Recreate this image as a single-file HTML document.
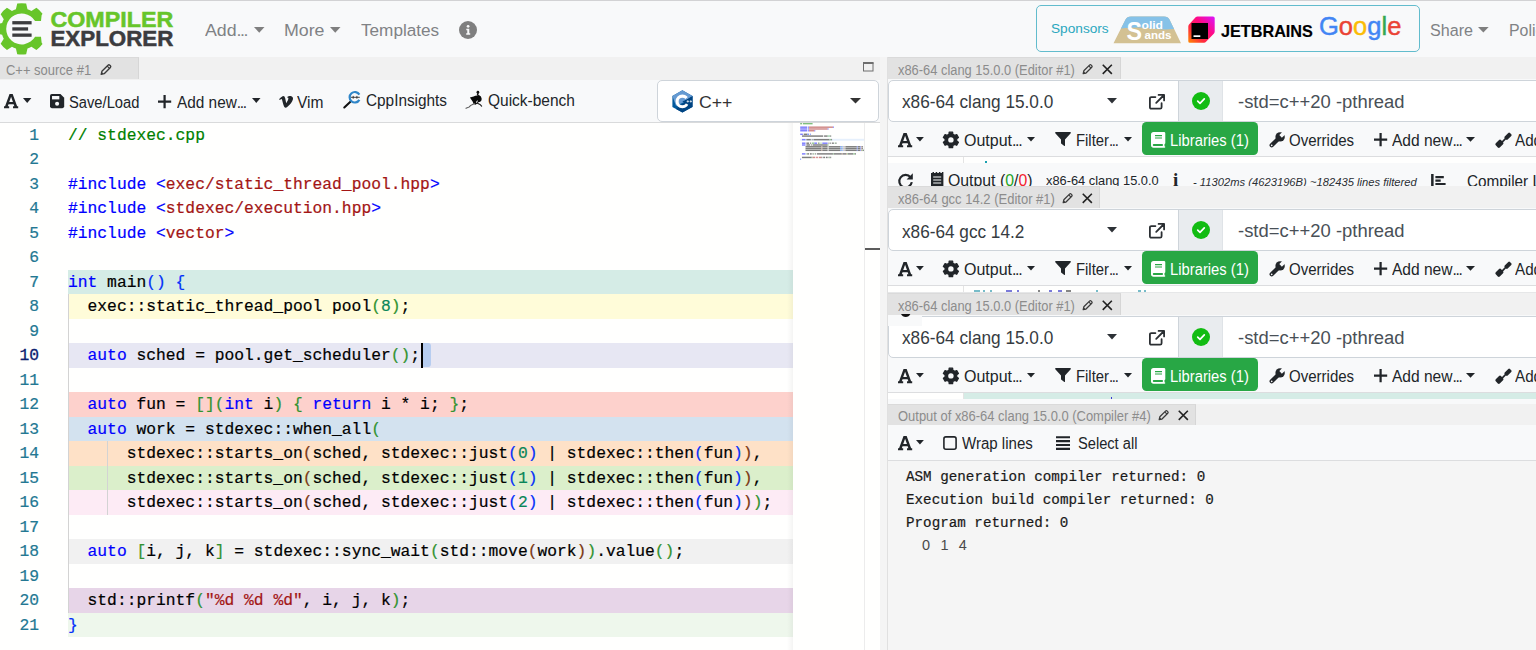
<!DOCTYPE html>
<html>
<head>
<meta charset="utf-8">
<title>Compiler Explorer</title>
<style>
*{box-sizing:border-box;margin:0;padding:0}
html,body{width:1536px;height:650px;overflow:hidden;background:#fff}
body{font-family:"Liberation Sans",sans-serif;color:#212529;position:relative}
.abs{position:absolute}
.t{position:absolute;white-space:pre;line-height:1;transform-origin:0 50%}
svg{position:absolute;overflow:visible}
#nav{position:absolute;left:0;top:0;width:1536px;height:57px;background:#f8f9fa;border-top:1px solid #d2d2d4}
.tabrow{position:absolute;background:#f1f1f1}
.tab{position:absolute;background:#e2e2e2;border-top:1px solid #dadada;border-right:1px solid #d6d6d6}
.bar{position:absolute;background:#f8f9fa}
.box{position:absolute;background:#fff;border:1px solid #ced4da;border-radius:5px}
#ed{position:absolute;left:0;top:122.5px;width:880px;height:528px;background:#fffffe;overflow:hidden}
.ln{position:absolute;left:0;width:39px;text-align:right;font-family:"Liberation Mono",monospace;font-size:16.305px;color:#237893;height:24.5px;line-height:26.6px;-webkit-text-stroke:0.2px currentColor}
.cl{position:absolute;left:68px;width:725px;height:24.5px;line-height:26.6px;font-family:"Liberation Mono",monospace;font-size:16.305px;color:#000;white-space:pre;-webkit-text-stroke:0.2px currentColor}
.k{color:#0000ff}.c{color:#008000}.s{color:#a31515}.n{color:#098658}
.b1{color:#0431fa}.b2{color:#319331}.b3{color:#7b3814}
.ig{position:absolute;width:1px;background:#d3d3d3}
</style>
</head>
<body>
<div id="nav"></div>
<svg style="left:0px;top:0px" width="180" height="58" viewBox="0 0 180 58"><path d="M35.09,21.10 L41.0,21.10 L41.6,15.2 L42.49,13.79 A25.7,25.7 0 0 0 36.44,7.85 L31.43,10.97 A20.4,20.4 0 0 0 27.49,9.34 L26.16,3.59 A25.7,25.7 0 0 0 17.24,3.59 L15.91,9.34 A20.4,20.4 0 0 0 11.97,10.97 L6.96,7.85 A25.7,25.7 0 0 0 0.65,14.16 L3.77,19.17 A20.4,20.4 0 0 0 2.14,23.11 L-3.61,24.44 A25.7,25.7 0 0 0 -3.61,33.36 L2.14,34.69 A20.4,20.4 0 0 0 3.77,38.63 L0.65,43.64 A25.7,25.7 0 0 0 6.96,49.95 L11.97,46.83 A20.4,20.4 0 0 0 15.91,48.46 L17.24,54.21 A25.7,25.7 0 0 0 26.16,54.21 L27.49,48.46 A20.4,20.4 0 0 0 31.43,46.83 L36.44,49.95 A25.7,25.7 0 0 0 42.49,44.01 L41.6,42.60 L41.0,36.70 L35.09,36.70 A15.5,15.5 0 1 1 35.09,21.10Z" fill="#67c52a"/>
<rect x="12.3" y="21.1" width="19.3" height="3.3" fill="#3c3c3f"/>
<rect x="12.3" y="27.3" width="15.8" height="3.3" fill="#3c3c3f"/>
<rect x="12.3" y="33.5" width="19.3" height="3.3" fill="#3c3c3f"/>
<text x="50.4" y="27" font-family="Liberation Sans" font-weight="bold" font-size="22.6" fill="#67c52a" stroke="#67c52a" stroke-width="0.5" textLength="123" lengthAdjust="spacingAndGlyphs">COMPILER</text>
<text x="50.4" y="46.3" font-family="Liberation Sans" font-weight="bold" font-size="21.6" fill="#3c3c3f" stroke="#3c3c3f" stroke-width="0.5" textLength="123" lengthAdjust="spacingAndGlyphs">EXPLORER</text></svg>
<div class="t" style="left:204.80px;top:22.00px;font-size:17.1px;color:#808285;font-family:'Liberation Sans',sans-serif;transform:scaleX(1.0387)">Add<span style="letter-spacing:-1.45px">...</span></div><svg style="left:253.60px;top:26.50px" width="10.50" height="5.70" viewBox="0 0 10.50 5.70"><path d="M0 0 H10.50 L5.25 5.70Z" fill="#7f7f7f"/></svg>
<div class="t" style="left:284.40px;top:22.00px;font-size:17.1px;color:#808285;font-family:'Liberation Sans',sans-serif;transform:scaleX(1.0398)">More</div><svg style="left:330.00px;top:26.50px" width="10.50" height="5.70" viewBox="0 0 10.50 5.70"><path d="M0 0 H10.50 L5.25 5.70Z" fill="#7f7f7f"/></svg>
<div class="t" style="left:360.70px;top:22.00px;font-size:17.1px;color:#808285;font-family:'Liberation Sans',sans-serif;transform:scaleX(1.0038)">Templates</div>
<svg style="left:458.8px;top:20.7px" width="18" height="18" viewBox="0 0 17 17"><circle cx="8.5" cy="8.5" r="8.5" fill="#7f7f7f"/><circle cx="8.6" cy="5" r="1.3" fill="#f8f9fa"/><path d="M6.9 7.4h2.8v4.2h0.9v1.4H6.8v-1.4h1V8.8h-0.9z" fill="#f8f9fa"/></svg>
<div class="abs" style="left:1036.3px;top:5px;width:383.6px;height:46.6px;border:1px solid #62bccd;border-radius:5px"></div>
<div class="t" style="left:1050.80px;top:22.00px;font-size:13.2px;color:#2aa7be;font-family:'Liberation Sans',sans-serif;transform:scaleX(1.0356)">Sponsors</div>

<svg style="left:1113px;top:15.5px" width="68" height="28" viewBox="0 0 68 28">
<defs><clipPath id="ssc"><path d="M0.5 27.3 L12.5 3.5 Q14 0.5 18 0.5 H51 Q55 0.5 56.5 3.5 L68 27.3 Z"/></clipPath></defs>
<g clip-path="url(#ssc)"><rect x="0" y="0" width="68" height="28" fill="#d3c193"/>
<path d="M0 0 H68 V12 Q55 14.5 40 12.5 Q22 10 0 13.5 Z" fill="#86c2e8"/></g>
<text x="13.5" y="23.6" font-family="Liberation Sans" font-weight="bold" font-size="25.5" fill="#fff" textLength="15.5" lengthAdjust="spacingAndGlyphs">S</text>
<text x="28.5" y="12.6" font-family="Liberation Sans" font-weight="bold" font-size="11" fill="#fff" textLength="21.5" lengthAdjust="spacingAndGlyphs">olid</text>
<text x="31.5" y="23.4" font-family="Liberation Sans" font-weight="bold" font-size="11" fill="#fff" textLength="27" lengthAdjust="spacingAndGlyphs">ands</text>
</svg>
<svg style="left:1188px;top:15.8px" width="27" height="27" viewBox="0 0 27 27">
<defs><linearGradient id="jbg" x1="0" y1="1" x2="1" y2="0"><stop offset="0" stop-color="#ff8a00"/><stop offset="0.3" stop-color="#ff2d3a"/><stop offset="0.62" stop-color="#ff0a86"/><stop offset="1" stop-color="#d915ff"/></linearGradient></defs>
<path d="M9.5 0.4 H25 Q26.7 0.4 26.7 2 V15.5 Q26.7 16.6 26 17.4 L18 25.8 Q17.2 26.7 16 26.7 H1.8 Q0.3 26.7 0.3 25.2 V10.5 Q0.3 9.4 1 8.6 L7.6 1.3 Q8.4 0.4 9.5 0.4Z" fill="url(#jbg)"/>
<rect x="3.5" y="7" width="16.5" height="16" fill="#000"/>
<rect x="5.5" y="19.3" width="6.8" height="1.7" fill="#fff"/>
</svg>
<div class="t" style="left:1220.70px;top:23.00px;font-size:16.3px;color:#000;font-family:'Liberation Sans',sans-serif;font-weight:bold;transform:scaleX(0.9959);-webkit-text-stroke:0.15px #000">JETBRAINS</div>
<div class="t" style="left:1319.2px;top:13.32px;font-size:26.2px;transform:scaleX(0.975);-webkit-text-stroke:0.45px currentColor"><span style="color:#4285f4">G</span><span style="color:#ea4335">o</span><span style="color:#fbbc05">o</span><span style="color:#4285f4">g</span><span style="color:#34a853">l</span><span style="color:#ea4335">e</span></div>

<div class="t" style="left:1430.00px;top:22.00px;font-size:17.1px;color:#808285;font-family:'Liberation Sans',sans-serif;transform:scaleX(0.9425)">Share</div><svg style="left:1478.00px;top:26.50px" width="10.70" height="5.50" viewBox="0 0 10.70 5.50"><path d="M0 0 H10.70 L5.35 5.50Z" fill="#7f7f7f"/></svg>
<div class="t" style="left:1509.40px;top:22.00px;font-size:17.1px;color:#808285;font-family:'Liberation Sans',sans-serif;transform:scaleX(0.93)">Policies</div>


<div class="tabrow" style="left:0;top:57px;width:881.2px;height:22.5px"></div>
<div class="tab" style="left:0;top:57px;width:139px;height:22.3px"></div>
<div class="t" style="left:6.30px;top:63.00px;font-size:14px;color:#8a8a8a;font-family:'Liberation Sans',sans-serif;transform:scaleX(0.9266)">C++ source #1</div>
<svg style="left:100.6px;top:63.6px" width="10.5" height="10.5" viewBox="0 0 10.5 10.5"><path d="M0.2 10.3 L0.9 7.3 L7 1.2 Q7.9 0.3 8.8 1.2 L9.4 1.8 Q10.2 2.7 9.4 3.5 L3.2 9.7 Z" fill="none" stroke="#3a3a3a" stroke-width="1.35" stroke-linejoin="round"/><path d="M6.2 2.1 L8.5 4.4" stroke="#3a3a3a" stroke-width="1.2"/><path d="M0.2 10.3 L0.8 7.9 L2.6 9.7Z" fill="#3a3a3a"/></svg>
<svg style="left:862.5px;top:61.5px" width="10.5" height="9.5" viewBox="0 0 10.5 9.5"><rect x="0.5" y="1" width="9.5" height="8" fill="none" stroke="#6e6e6e" stroke-width="1"/><rect x="0" y="0" width="10.5" height="2" fill="#6e6e6e"/></svg>
<div class="bar" style="left:0;top:79.5px;width:880px;height:43px;border-bottom:1px solid #d9dadb"></div>
<svg style="left:4.4px;top:94.3px" width="14.2" height="14.2" viewBox="0 0 14 14"><path fill-rule="evenodd" d="M5.45 0 H8.55 L12.95 12.1 H14 V14 H8.9 V12.1 H10.25 L9.55 10 H4.45 L3.75 12.1 H5.1 V14 H0 V12.1 H1.05 Z M5.15 8 H8.85 L7 2.6 Z" fill="#212529"/></svg><svg style="left:22.60px;top:98.20px" width="8.40" height="4.90" viewBox="0 0 8.40 4.90"><path d="M0 0 H8.40 L4.20 4.90Z" fill="#212529"/></svg>
<svg style="left:50.3px;top:94.3px" width="14.2" height="14.2" viewBox="0 0 14 14"><path d="M1.8 0 H10.3 L14 3.7 V12.2 Q14 14 12.2 14 H1.8 Q0 14 0 12.2 V1.8 Q0 0 1.8 0Z" fill="#212529"/><rect x="2" y="2" width="7.2" height="3.3" fill="#f8f9fa"/><circle cx="7" cy="9.6" r="2" fill="#f8f9fa"/></svg>
<div class="t" style="left:68.80px;top:95.00px;font-size:16px;color:#212529;font-family:'Liberation Sans',sans-serif;transform:scaleX(0.9201)">Save/Load</div>
<svg style="left:158.3px;top:95.2px" width="13.2" height="13.2" viewBox="0 0 13 13"><path d="M6.5 0 V13 M0 6.5 H13" stroke="#212529" stroke-width="2.2" fill="none"/></svg>
<div class="t" style="left:176.50px;top:95.00px;font-size:16px;color:#212529;font-family:'Liberation Sans',sans-serif;transform:scaleX(0.9603)">Add new<span style="letter-spacing:-1.36px">...</span></div><svg style="left:251.50px;top:98.20px" width="8.50" height="4.90" viewBox="0 0 8.50 4.90"><path d="M0 0 H8.50 L4.25 4.90Z" fill="#212529"/></svg>
<svg style="left:278.6px;top:95.8px" width="14.5" height="11.8" viewBox="0 0 14.5 11.8"><path d="M0 3.2 Q1.8 1 3.6 0.2 Q5.6 -0.4 6.2 2.2 L7.2 7.2 Q9.6 4 9.4 2.3 Q9.2 1.2 7.9 1.8 Q8.6 -0.6 11.6 0 Q14.6 0.6 13.9 3.4 Q12.9 7 8.2 11 Q6.4 12.4 5.2 10.8 Q4.4 9.6 3 3.6 Q2.6 2.4 1 3.9Z" fill="#212529"/></svg>
<div class="t" style="left:297.00px;top:95.00px;font-size:16px;color:#212529;font-family:'Liberation Sans',sans-serif;transform:scaleX(0.9719)">Vim</div>
<svg style="left:343px;top:90px" width="20" height="20" viewBox="0 0 20 20"><path d="M1.3 17.5 L7.4 11.8" stroke="#111" stroke-width="2.1" stroke-linecap="round"/>
<path d="M16.4 4.6 A5.25 5.25 0 1 0 16.4 9.9" fill="none" stroke="#2f86c8" stroke-width="2.2"/>
<path d="M7.8 7.3 H16.8 M10.2 5.9 V8.7 M13.9 5.9 V8.7" stroke="#2a2a2a" stroke-width="0.9"/></svg>
<div class="t" style="left:365.50px;top:93.00px;font-size:16px;color:#212529;font-family:'Liberation Sans',sans-serif;transform:scaleX(0.9586)">CppInsights</div>
<svg style="left:465px;top:90px" width="18" height="19" viewBox="0 0 18 19"><circle cx="12.9" cy="2.2" r="1.35" fill="#111"/>
<path d="M13.4 3 Q11.6 4.6 13.6 5.6 Q15.4 6.4 15.4 7.6" fill="none" stroke="#111" stroke-width="1.5"/>
<path d="M4.9 7.6 L8.6 6.6 Q11.5 4.9 14.6 6 Q17.4 7.4 16.4 10.6 Q15.6 12.4 13.8 12 L12.4 13.4 L10.4 14.8 Q8.2 14.2 7.6 11.4 Z" fill="#0a0a0a"/>
<path d="M10.9 12.9 Q11.2 10.6 12.9 10.2 L12.2 12.6Z" fill="#f8f9fa"/>
<path d="M9.6 13.6 L5.4 15.6 L4.4 16.9 L1 18.2" fill="none" stroke="#555" stroke-width="1.1" stroke-linecap="round"/>
<path d="M12.4 13.3 L15 14.4 L16.6 16.1" fill="none" stroke="#222" stroke-width="1.2" stroke-linecap="round"/></svg>
<div class="t" style="left:487.60px;top:93.00px;font-size:16px;color:#212529;font-family:'Liberation Sans',sans-serif;transform:scaleX(0.9674)">Quick-bench</div>
<div class="box" style="left:657.4px;top:80px;width:222px;height:42px"></div>
<svg style="left:672.2px;top:89.8px" width="20.8" height="22.8" viewBox="0 0 20.8 22.8"><path d="M10.4 0.2 L20.4 5.9 V16.9 L10.4 22.6 L0.4 16.9 V5.9 Z" fill="#00599c"/>
<path d="M10.4 0.2 L20.4 5.9 L10.4 11.4 L0.4 5.9 Z M0.4 5.9 L10.4 11.4 L20.4 5.9 L20.4 8 L 4 16 Z" fill="#659ad2"/>
<path d="M20.4 5.9 V16.9 L10.4 22.6 L4 19 Z" fill="#004482"/>
<circle cx="10.4" cy="11.4" r="5.3" fill="none" stroke="#fff" stroke-width="3.1"/>
<path d="M10.4 11.4 L20.4 5.9 V16.9 Z" fill="#004482"/>
<path d="M10.4 11.4 L20.4 5.9 L18.5 4.8 L 13.5 9 Z" fill="#659ad2"/>
<path d="M14.6 11.4 H17 M15.8 10.2 V12.6 M17.6 11.4 H20 M18.8 10.2 V12.6" stroke="#fff" stroke-width="0.7"/></svg>
<div class="t" style="left:698.60px;top:95.00px;font-size:16px;color:#333;font-family:'Liberation Sans',sans-serif;transform:scaleX(1.1041)">C++</div>
<svg style="left:850.00px;top:98.00px" width="11.00" height="5.40" viewBox="0 0 11.00 5.40"><path d="M0 0 H11.00 L5.50 5.40Z" fill="#333"/></svg>

<div id="ed">
<div class="ln" style="top:0.0px">1</div>
<div class="cl" style="top:0.0px"><span class="c">// stdexec.cpp</span></div>
<div class="ln" style="top:24.5px">2</div>
<div class="cl" style="top:24.5px"></div>
<div class="ln" style="top:49.0px">3</div>
<div class="cl" style="top:49.0px"><span class="k">#include</span> <span class="k">&lt;</span><span class="s">exec/static_thread_pool.hpp</span><span class="k">&gt;</span></div>
<div class="ln" style="top:73.5px">4</div>
<div class="cl" style="top:73.5px"><span class="k">#include</span> <span class="k">&lt;</span><span class="s">stdexec/execution.hpp</span><span class="k">&gt;</span></div>
<div class="ln" style="top:98.0px">5</div>
<div class="cl" style="top:98.0px"><span class="k">#include</span> <span class="k">&lt;</span><span class="s">vector</span><span class="k">&gt;</span></div>
<div class="ln" style="top:122.5px">6</div>
<div class="cl" style="top:122.5px"></div>
<div class="ln" style="top:147.0px">7</div>
<div class="cl" style="top:147.0px;background:#d5ece6"><span class="k">int</span> main<span class="b1">()</span> <span class="b1">{</span></div>
<div class="ln" style="top:171.5px">8</div>
<div class="cl" style="top:171.5px;background:#fffcd9">  exec::static_thread_pool pool<span class="b2">(</span><span class="n">8</span><span class="b2">)</span>;</div>
<div class="ln" style="top:196.0px">9</div>
<div class="cl" style="top:196.0px"></div>
<div class="ln" style="top:220.5px;color:#0b216f;-webkit-text-stroke:0.3px #0b216f">10</div>
<div class="cl" style="top:220.5px;background:#e7e7f3">  <span class="k">auto</span> sched = pool.get_scheduler<span class="b2">()</span>;</div>
<div class="ln" style="top:245.0px">11</div>
<div class="cl" style="top:245.0px"></div>
<div class="ln" style="top:269.5px">12</div>
<div class="cl" style="top:269.5px;background:#fdd1cc">  <span class="k">auto</span> fun = <span class="b2">[](</span><span class="k">int</span> i<span class="b2">)</span> <span class="b2">{</span> <span class="k">return</span> i * i; <span class="b2">}</span>;</div>
<div class="ln" style="top:294.0px">13</div>
<div class="cl" style="top:294.0px;background:#d3e2ef">  <span class="k">auto</span> work = stdexec::when_all<span class="b2">(</span></div>
<div class="ln" style="top:318.5px">14</div>
<div class="cl" style="top:318.5px;background:#fee1c7">      stdexec::starts_on<span class="b3">(</span>sched, stdexec::just<span class="b1">(</span><span class="n">0</span><span class="b1">)</span> | stdexec::then<span class="b1">(</span>fun<span class="b1">)</span><span class="b3">)</span>,</div>
<div class="ln" style="top:343.0px">15</div>
<div class="cl" style="top:343.0px;background:#dbefcb">      stdexec::starts_on<span class="b3">(</span>sched, stdexec::just<span class="b1">(</span><span class="n">1</span><span class="b1">)</span> | stdexec::then<span class="b1">(</span>fun<span class="b1">)</span><span class="b3">)</span>,</div>
<div class="ln" style="top:367.5px">16</div>
<div class="cl" style="top:367.5px;background:#fdebf5">      stdexec::starts_on<span class="b3">(</span>sched, stdexec::just<span class="b1">(</span><span class="n">2</span><span class="b1">)</span> | stdexec::then<span class="b1">(</span>fun<span class="b1">)</span><span class="b3">)</span><span class="b2">)</span>;</div>
<div class="ln" style="top:392.0px">17</div>
<div class="cl" style="top:392.0px"></div>
<div class="ln" style="top:416.5px">18</div>
<div class="cl" style="top:416.5px;background:#f1f1f1">  <span class="k">auto</span> <span class="b2">[</span>i, j, k<span class="b2">]</span> = stdexec::sync_wait<span class="b2">(</span>std::move<span class="b3">(</span>work<span class="b3">)</span><span class="b2">)</span>.value<span class="b2">()</span>;</div>
<div class="ln" style="top:441.0px">19</div>
<div class="cl" style="top:441.0px"></div>
<div class="ln" style="top:465.5px">20</div>
<div class="cl" style="top:465.5px;background:#e7d5e8">  std::printf<span class="b2">(</span><span class="s">"%d %d %d"</span>, i, j, k<span class="b2">)</span>;</div>
<div class="ln" style="top:490.0px">21</div>
<div class="cl" style="top:490.0px;background:#eef7ec"><span class="b1">}</span></div>
<div class="ig" style="left:68px;top:171.5px;height:318.5px"></div>
<div class="ig" style="left:107px;top:318.5px;height:73.5px"></div>
<div class="abs" style="left:421.8px;top:220.5px;width:9px;height:23.5px;background:#b7cdf0;border-radius:0 3px 3px 0"></div>
<div class="abs" style="left:420.5px;top:220.5px;width:2px;height:24.5px;background:#000"></div>
<div class="abs" style="left:787px;top:0;width:6px;height:528px;background:linear-gradient(to right,rgba(0,0,0,0),rgba(0,0,0,0.045))"></div>
<div class="abs" style="left:793px;top:0;width:72px;height:528px;background:#fffffe"></div>
<svg style="left:793px;top:0" width="72" height="40" viewBox="0 0 72 40"><g opacity="0.5"><rect x="7" y="15.82" width="64.5" height="1.9" fill="#cfe2fc"/><rect x="7.20" y="-0.10" width="1.77" height="1.45" fill="#008000"/><rect x="9.86" y="-0.10" width="9.73" height="1.45" fill="#008000"/><rect x="7.20" y="3.46" width="7.08" height="1.45" fill="#0000ff"/><rect x="15.16" y="3.46" width="0.89" height="1.45" fill="#0000ff"/><rect x="16.05" y="3.46" width="23.89" height="1.45" fill="#a31515"/><rect x="39.95" y="3.46" width="0.89" height="1.45" fill="#0000ff"/><rect x="7.20" y="5.24" width="7.08" height="1.45" fill="#0000ff"/><rect x="15.16" y="5.24" width="0.89" height="1.45" fill="#0000ff"/><rect x="16.05" y="5.24" width="18.59" height="1.45" fill="#a31515"/><rect x="34.63" y="5.24" width="0.89" height="1.45" fill="#0000ff"/><rect x="7.20" y="7.02" width="7.08" height="1.45" fill="#0000ff"/><rect x="15.16" y="7.02" width="0.89" height="1.45" fill="#0000ff"/><rect x="16.05" y="7.02" width="5.31" height="1.45" fill="#a31515"/><rect x="21.36" y="7.02" width="0.89" height="1.45" fill="#0000ff"/><rect x="7.20" y="10.58" width="2.66" height="1.45" fill="#0000ff"/><rect x="10.74" y="10.58" width="3.54" height="1.45" fill="#000000"/><rect x="14.28" y="10.58" width="1.77" height="1.45" fill="#0431fa"/><rect x="16.93" y="10.58" width="0.89" height="1.45" fill="#0431fa"/><rect x="8.97" y="12.36" width="21.24" height="1.45" fill="#000000"/><rect x="31.09" y="12.36" width="3.54" height="1.45" fill="#000000"/><rect x="34.63" y="12.36" width="0.89" height="1.45" fill="#319331"/><rect x="35.52" y="12.36" width="0.89" height="1.45" fill="#098658"/><rect x="36.41" y="12.36" width="0.89" height="1.45" fill="#319331"/><rect x="37.29" y="12.36" width="0.89" height="1.45" fill="#000000"/><rect x="8.97" y="15.92" width="3.54" height="1.45" fill="#0000ff"/><rect x="13.39" y="15.92" width="4.42" height="1.45" fill="#000000"/><rect x="18.71" y="15.92" width="0.89" height="1.45" fill="#000000"/><rect x="20.48" y="15.92" width="15.93" height="1.45" fill="#000000"/><rect x="36.41" y="15.92" width="1.77" height="1.45" fill="#319331"/><rect x="38.18" y="15.92" width="0.89" height="1.45" fill="#000000"/><rect x="8.97" y="19.48" width="3.54" height="1.45" fill="#0000ff"/><rect x="13.39" y="19.48" width="2.66" height="1.45" fill="#000000"/><rect x="16.93" y="19.48" width="0.89" height="1.45" fill="#000000"/><rect x="18.71" y="19.48" width="2.66" height="1.45" fill="#319331"/><rect x="21.36" y="19.48" width="2.66" height="1.45" fill="#0000ff"/><rect x="24.90" y="19.48" width="0.89" height="1.45" fill="#000000"/><rect x="25.79" y="19.48" width="0.89" height="1.45" fill="#319331"/><rect x="27.55" y="19.48" width="0.89" height="1.45" fill="#319331"/><rect x="29.32" y="19.48" width="5.31" height="1.45" fill="#0000ff"/><rect x="35.52" y="19.48" width="0.89" height="1.45" fill="#000000"/><rect x="37.29" y="19.48" width="0.89" height="1.45" fill="#000000"/><rect x="39.06" y="19.48" width="1.77" height="1.45" fill="#000000"/><rect x="41.72" y="19.48" width="0.89" height="1.45" fill="#319331"/><rect x="42.60" y="19.48" width="0.89" height="1.45" fill="#000000"/><rect x="8.97" y="21.26" width="3.54" height="1.45" fill="#0000ff"/><rect x="13.39" y="21.26" width="3.54" height="1.45" fill="#000000"/><rect x="17.82" y="21.26" width="0.89" height="1.45" fill="#000000"/><rect x="19.59" y="21.26" width="15.04" height="1.45" fill="#000000"/><rect x="34.63" y="21.26" width="0.89" height="1.45" fill="#319331"/><rect x="12.51" y="23.04" width="15.93" height="1.45" fill="#000000"/><rect x="28.44" y="23.04" width="0.89" height="1.45" fill="#7b3814"/><rect x="29.32" y="23.04" width="5.31" height="1.45" fill="#000000"/><rect x="35.52" y="23.04" width="11.51" height="1.45" fill="#000000"/><rect x="47.03" y="23.04" width="0.89" height="1.45" fill="#0431fa"/><rect x="47.91" y="23.04" width="0.89" height="1.45" fill="#098658"/><rect x="48.80" y="23.04" width="0.89" height="1.45" fill="#0431fa"/><rect x="50.57" y="23.04" width="0.89" height="1.45" fill="#000000"/><rect x="52.34" y="23.04" width="11.51" height="1.45" fill="#000000"/><rect x="63.84" y="23.04" width="0.89" height="1.45" fill="#0431fa"/><rect x="64.72" y="23.04" width="2.66" height="1.45" fill="#000000"/><rect x="67.38" y="23.04" width="0.89" height="1.45" fill="#0431fa"/><rect x="68.27" y="23.04" width="0.89" height="1.45" fill="#7b3814"/><rect x="69.15" y="23.04" width="0.89" height="1.45" fill="#000000"/><rect x="12.51" y="24.82" width="15.93" height="1.45" fill="#000000"/><rect x="28.44" y="24.82" width="0.89" height="1.45" fill="#7b3814"/><rect x="29.32" y="24.82" width="5.31" height="1.45" fill="#000000"/><rect x="35.52" y="24.82" width="11.51" height="1.45" fill="#000000"/><rect x="47.03" y="24.82" width="0.89" height="1.45" fill="#0431fa"/><rect x="47.91" y="24.82" width="0.89" height="1.45" fill="#098658"/><rect x="48.80" y="24.82" width="0.89" height="1.45" fill="#0431fa"/><rect x="50.57" y="24.82" width="0.89" height="1.45" fill="#000000"/><rect x="52.34" y="24.82" width="11.51" height="1.45" fill="#000000"/><rect x="63.84" y="24.82" width="0.89" height="1.45" fill="#0431fa"/><rect x="64.72" y="24.82" width="2.66" height="1.45" fill="#000000"/><rect x="67.38" y="24.82" width="0.89" height="1.45" fill="#0431fa"/><rect x="68.27" y="24.82" width="0.89" height="1.45" fill="#7b3814"/><rect x="69.15" y="24.82" width="0.89" height="1.45" fill="#000000"/><rect x="12.51" y="26.60" width="15.93" height="1.45" fill="#000000"/><rect x="28.44" y="26.60" width="0.89" height="1.45" fill="#7b3814"/><rect x="29.32" y="26.60" width="5.31" height="1.45" fill="#000000"/><rect x="35.52" y="26.60" width="11.51" height="1.45" fill="#000000"/><rect x="47.03" y="26.60" width="0.89" height="1.45" fill="#0431fa"/><rect x="47.91" y="26.60" width="0.89" height="1.45" fill="#098658"/><rect x="48.80" y="26.60" width="0.89" height="1.45" fill="#0431fa"/><rect x="50.57" y="26.60" width="0.89" height="1.45" fill="#000000"/><rect x="52.34" y="26.60" width="11.51" height="1.45" fill="#000000"/><rect x="63.84" y="26.60" width="0.89" height="1.45" fill="#0431fa"/><rect x="64.72" y="26.60" width="2.66" height="1.45" fill="#000000"/><rect x="67.38" y="26.60" width="0.89" height="1.45" fill="#0431fa"/><rect x="68.27" y="26.60" width="0.89" height="1.45" fill="#7b3814"/><rect x="69.15" y="26.60" width="0.89" height="1.45" fill="#319331"/><rect x="70.03" y="26.60" width="0.89" height="1.45" fill="#000000"/><rect x="8.97" y="30.16" width="3.54" height="1.45" fill="#0000ff"/><rect x="13.39" y="30.16" width="0.89" height="1.45" fill="#319331"/><rect x="14.28" y="30.16" width="1.77" height="1.45" fill="#000000"/><rect x="16.93" y="30.16" width="1.77" height="1.45" fill="#000000"/><rect x="19.59" y="30.16" width="0.89" height="1.45" fill="#000000"/><rect x="20.48" y="30.16" width="0.89" height="1.45" fill="#319331"/><rect x="22.25" y="30.16" width="0.89" height="1.45" fill="#000000"/><rect x="24.02" y="30.16" width="15.93" height="1.45" fill="#000000"/><rect x="39.95" y="30.16" width="0.89" height="1.45" fill="#319331"/><rect x="40.83" y="30.16" width="7.96" height="1.45" fill="#000000"/><rect x="48.80" y="30.16" width="0.89" height="1.45" fill="#7b3814"/><rect x="49.68" y="30.16" width="3.54" height="1.45" fill="#000000"/><rect x="53.22" y="30.16" width="0.89" height="1.45" fill="#7b3814"/><rect x="54.11" y="30.16" width="0.89" height="1.45" fill="#319331"/><rect x="54.99" y="30.16" width="5.31" height="1.45" fill="#000000"/><rect x="60.30" y="30.16" width="1.77" height="1.45" fill="#319331"/><rect x="62.07" y="30.16" width="0.89" height="1.45" fill="#000000"/><rect x="8.97" y="33.72" width="9.73" height="1.45" fill="#000000"/><rect x="18.71" y="33.72" width="0.89" height="1.45" fill="#319331"/><rect x="19.59" y="33.72" width="2.66" height="1.45" fill="#a31515"/><rect x="23.13" y="33.72" width="1.77" height="1.45" fill="#a31515"/><rect x="25.79" y="33.72" width="2.66" height="1.45" fill="#a31515"/><rect x="28.44" y="33.72" width="0.89" height="1.45" fill="#000000"/><rect x="30.21" y="33.72" width="1.77" height="1.45" fill="#000000"/><rect x="32.87" y="33.72" width="1.77" height="1.45" fill="#000000"/><rect x="35.52" y="33.72" width="0.89" height="1.45" fill="#000000"/><rect x="36.41" y="33.72" width="0.89" height="1.45" fill="#319331"/><rect x="37.29" y="33.72" width="0.89" height="1.45" fill="#000000"/><rect x="7.20" y="35.50" width="0.89" height="1.45" fill="#0431fa"/></g></svg>
<div class="abs" style="left:864px;top:0;width:1px;height:528px;background:#ececec"></div>
<div class="abs" style="left:865px;top:125.5px;width:15px;height:2px;background:#5c5c5c"></div>
</div>

<div class="abs" style="left:880px;top:57px;width:7.5px;height:593px;background:#f4f4f4"></div>

<div class="tabrow" style="left:887.5px;top:57px;width:649px;height:23px"></div>
<div class="tab" style="left:887.5px;top:57px;width:233.29999999999995px;height:22.3px"></div>
<div class="t" style="left:897.90px;top:63.00px;font-size:14px;color:#8c8c8c;font-family:'Liberation Sans',sans-serif;transform:scaleX(0.9202)">x86-64 clang 15.0.0 (Editor #1)</div>
<svg style="left:1083.4px;top:64.2px" width="9.8" height="9.8" viewBox="0 0 10.5 10.5"><path d="M0.2 10.3 L0.9 7.3 L7 1.2 Q7.9 0.3 8.8 1.2 L9.4 1.8 Q10.2 2.7 9.4 3.5 L3.2 9.7 Z" fill="none" stroke="#3a3a3a" stroke-width="1.35" stroke-linejoin="round"/><path d="M6.2 2.1 L8.5 4.4" stroke="#3a3a3a" stroke-width="1.2"/><path d="M0.2 10.3 L0.8 7.9 L2.6 9.7Z" fill="#3a3a3a"/></svg>
<svg style="left:1102.3px;top:64.2px" width="10.6" height="10.6" viewBox="0 0 10 10"><path d="M0.7 0.7 L9.3 9.3 M9.3 0.7 L0.7 9.3" stroke="#222" stroke-width="1.5" fill="none"/></svg>
<div class="bar" style="left:887.5px;top:79.3px;width:649px;height:77.5px"></div>
<div class="box" style="left:888.4px;top:80px;width:700px;height:42px"></div>
<div class="t" style="left:902.00px;top:94.00px;font-size:17.8px;color:#363b41;font-family:'Liberation Sans',sans-serif;transform:scaleX(0.9686)">x86-64 clang 15.0.0</div>
<svg style="left:1107.00px;top:98.00px" width="10.00" height="5.50" viewBox="0 0 10.00 5.50"><path d="M0 0 H10.00 L5.00 5.50Z" fill="#2d3136"/></svg>
<svg style="left:1148.9px;top:93.6px" width="16" height="15.6" viewBox="0 0 16 15.6"><path d="M12.6 9.2 V13.2 Q12.6 14.7 11.1 14.7 H2.4 Q0.9 14.7 0.9 13.2 V4.6 Q0.9 3.1 2.4 3.1 H6.4" fill="none" stroke="#2b2f33" stroke-width="1.8" stroke-linecap="round"/>
<path d="M9.6 0.9 H15.1 V6.4 M15 1 L7.2 8.8" fill="none" stroke="#2b2f33" stroke-width="1.8" stroke-linecap="round" stroke-linejoin="round"/></svg>
<div class="abs" style="left:1178.2px;top:81px;width:45.3px;height:40px;background:#e9ecef;border-left:1px solid #ced4da;border-right:1px solid #dfe3e7"></div>
<svg style="left:1191.5px;top:91.8px" width="18" height="18" viewBox="0 0 18 18"><circle cx="9" cy="9" r="9" fill="#12bc12"/><path d="M5.7 9.2 L8 11.4 L12.3 6.9" fill="none" stroke="#fff" stroke-width="1.7" stroke-linecap="round" stroke-linejoin="round"/></svg>
<div class="t" style="left:1238.20px;top:94.00px;font-size:17.6px;color:#495057;font-family:'Liberation Sans',sans-serif;transform:scaleX(1.0482)">-std=c++20 -pthread</div>
<svg style="left:897.5px;top:132.60000000000002px" width="14.2" height="14.2" viewBox="0 0 14 14"><path fill-rule="evenodd" d="M5.45 0 H8.55 L12.95 12.1 H14 V14 H8.9 V12.1 H10.25 L9.55 10 H4.45 L3.75 12.1 H5.1 V14 H0 V12.1 H1.05 Z M5.15 8 H8.85 L7 2.6 Z" fill="#212529"/></svg><svg style="left:916.20px;top:137.00px" width="7.90" height="4.50" viewBox="0 0 7.90 4.50"><path d="M0 0 H7.90 L3.95 4.50Z" fill="#212529"/></svg>
<svg style="left:943.2px;top:131.7px" width="15.8" height="15.8" viewBox="0 0 16 16"><path d="M9.95,2.33 L9.73,0.19 L6.27,0.19 L6.05,2.33 L4.06,3.47 L2.10,2.60 L0.37,5.59 L2.11,6.86 L2.11,9.14 L0.37,10.41 L2.10,13.40 L4.06,12.53 L6.05,13.67 L6.27,15.81 L9.73,15.81 L9.95,13.67 L11.94,12.53 L13.90,13.40 L15.63,10.41 L13.89,9.14 L13.89,6.86 L15.63,5.59 L13.90,2.60 L11.94,3.47Z" fill="#212529" stroke="#212529" stroke-width="1.3" stroke-linejoin="round"/><circle cx="8" cy="8" r="2.75" fill="#f8f9fa"/></svg>
<div class="t" style="left:963.90px;top:133.00px;font-size:16px;color:#212529;font-family:'Liberation Sans',sans-serif;transform:scaleX(0.9990)">Output<span style="letter-spacing:-1.36px">...</span></div><svg style="left:1027.00px;top:137.00px" width="8.00" height="4.50" viewBox="0 0 8.00 4.50"><path d="M0 0 H8.00 L4.00 4.50Z" fill="#212529"/></svg>
<svg style="left:1055px;top:132.2px" width="16" height="14" viewBox="0 0 16 14"><path d="M0.8 0 H15.2 Q16.4 0.2 15.7 1.3 L10 7.6 V13.4 Q9.9 14.3 9 13.7 L6.4 11.8 Q6 11.5 6 11 V7.6 L0.3 1.3 Q-0.4 0.2 0.8 0Z" fill="#212529"/></svg>
<div class="t" style="left:1075.70px;top:133.00px;font-size:16px;color:#212529;font-family:'Liberation Sans',sans-serif;transform:scaleX(0.9266)">Filter<span style="letter-spacing:-1.36px">...</span></div><svg style="left:1123.80px;top:137.00px" width="8.00" height="4.50" viewBox="0 0 8.00 4.50"><path d="M0 0 H8.00 L4.00 4.50Z" fill="#212529"/></svg>
<div class="abs" style="left:1142.1px;top:121.7px;width:116.3px;height:33.5px;background:#28a745;border-radius:4.5px"></div>
<svg style="left:1151.3px;top:131.9px" width="14.3" height="15.7" viewBox="0 0 14.3 15.7"><path d="M2.6 0 H13 Q14.3 0 14.3 1.2 V11 Q14.3 11.9 13.5 12 V14.2 Q14.3 14.4 14.3 15 Q14.3 15.7 13.4 15.7 H2.6 Q0 15.7 0 13.1 V2.6 Q0 0 2.6 0Z" fill="#fff"/>
<path d="M2.7 12.1 H11.8 V14 H2.7 Q1.8 14 1.8 13.05 Q1.8 12.1 2.7 12.1Z" fill="#28a745"/>
<path d="M4 3.6 H11 M4 6 H11" stroke="#28a745" stroke-width="1.1"/></svg>
<div class="t" style="left:1169.90px;top:133.00px;font-size:16px;color:#fff;font-family:'Liberation Sans',sans-serif;transform:scaleX(0.9243)">Libraries (1)</div>
<svg style="left:1268.6px;top:131.9px" width="16" height="16" viewBox="0 0 16 16"><path d="M2.7 13.3 L9.6 6.4" stroke="#212529" stroke-width="4.3" stroke-linecap="round"/>
<circle cx="11.1" cy="4.9" r="4.7" fill="#212529"/>
<path d="M12.9 5.7 L10.3 3.1 L14.6 -1.2 L17.2 1.4 Z" fill="#f8f9fa"/>
<circle cx="2.7" cy="13.3" r="0.85" fill="#f8f9fa"/></svg>
<div class="t" style="left:1288.90px;top:133.00px;font-size:16px;color:#212529;font-family:'Liberation Sans',sans-serif;transform:scaleX(0.9386)">Overrides</div>
<svg style="left:1374.3px;top:133.3px" width="13.2" height="13.2" viewBox="0 0 13 13"><path d="M6.5 0 V13 M0 6.5 H13" stroke="#212529" stroke-width="2.2" fill="none"/></svg>
<div class="t" style="left:1392.00px;top:133.00px;font-size:16px;color:#212529;font-family:'Liberation Sans',sans-serif;transform:scaleX(0.9713)">Add new<span style="letter-spacing:-1.36px">...</span></div><svg style="left:1466.40px;top:137.00px" width="9.00" height="4.70" viewBox="0 0 9.00 4.70"><path d="M0 0 H9.00 L4.50 4.70Z" fill="#212529"/></svg>
<svg style="left:1494.9px;top:131.8px" width="17" height="16" viewBox="0 0 17 16"><rect x="9.3" y="2.2" width="7.4" height="4.2" rx="1.2" fill="#212529" transform="rotate(-45 13 4.3)"/>
<path d="M6.4 10.8 L11 6.2" stroke="#212529" stroke-width="1.7"/>
<rect x="0.7" y="8.9" width="7.4" height="5.7" rx="1.4" fill="#212529" transform="rotate(-45 4.4 11.75)"/></svg>
<div class="t" style="left:1515.40px;top:133.00px;font-size:16px;color:#212529;font-family:'Liberation Sans',sans-serif;transform:scaleX(0.95)">Add tool<span style="letter-spacing:-1.36px">...</span></div>
<div class="abs" style="left:887.5px;top:155.8px;width:649px;height:1px;background:#dcdddf"></div>
<div class="abs" style="left:888.5px;top:156.8px;width:648px;height:6px;background:#fffffe"></div>
<div class="abs" style="left:963.3px;top:156.8px;width:1px;height:6px;background:#e4e4e4"></div>
<div class="abs" style="left:984.5px;top:161.2px;width:2px;height:1.6px;background:#1aa0b0"></div><div class="abs" style="left:887.5px;top:162.8px;width:649px;height:1px;background:#e6e7e8"></div>

<div class="bar" style="left:887.5px;top:163.4px;width:649px;height:24px"></div>
<svg style="left:898.4px;top:173.4px" width="15" height="15" viewBox="0 0 15 15"><path d="M12.6 4.4 A6.3 6.3 0 1 0 13.8 9.2" fill="none" stroke="#212529" stroke-width="2.15"/><path d="M14.8 0.2 V6.4 H8.6 Z" fill="#212529"/></svg>
<svg style="left:931px;top:172px" width="12.4" height="16" viewBox="0 0 12.4 16"><path d="M0 1 H1.5 V0 H3 V1 H4.7 V0 H6.2 V1 H7.9 V0 H9.4 V1 H10.9 V0 H12.4 V16 H0Z" fill="#212529"/><path d="M2.2 5 H10.2 M2.2 8 H10.2 M2.2 11 H10.2" stroke="#f8f9fa" stroke-width="1.1"/></svg>
<div class="t" style="left:947.70px;top:173.00px;font-size:16px;color:#212529;font-family:'Liberation Sans',sans-serif;transform:scaleX(0.9894)">Output (<span style="color:#25a325">0</span>/<span style="color:#f3212d">0</span>)</div>
<div class="t" style="left:1046.10px;top:174.00px;font-size:13.3px;color:#212529;font-family:'Liberation Sans',sans-serif;transform:scaleX(0.9648)">x86-64 clang 15.0.0</div>
<div class="t" style="left:1172.90px;top:172.00px;font-size:17.8px;color:#212529;font-family:'Liberation Serif',serif;font-weight:bold;transform:scaleX(1.0694)">i</div>
<div class="t" style="left:1192.70px;top:177.00px;font-size:10.8px;color:#2a2e33;font-family:'Liberation Sans',sans-serif;font-style:italic;transform:scaleX(1.0381)">- 11302ms (4623196B) ~182435 lines filtered</div>
<svg style="left:1431px;top:173.5px" width="15" height="14" viewBox="0 0 15 14"><path d="M1.35 0 V14" stroke="#212529" stroke-width="2.5"/><path d="M4.4 3.2 H12.8 M4.4 6.6 H9.7 M4.4 10 H14.6" stroke="#212529" stroke-width="2.2"/></svg>
<div class="t" style="left:1466.90px;top:174.00px;font-size:16px;color:#212529;font-family:'Liberation Sans',sans-serif;transform:scaleX(0.955)">Compiler License</div>


<div class="tabrow" style="left:887.5px;top:186px;width:649px;height:23px"></div>
<div class="tab" style="left:887.5px;top:186px;width:212.0999999999999px;height:22.3px"></div>
<div class="t" style="left:897.90px;top:192.00px;font-size:14px;color:#8c8c8c;font-family:'Liberation Sans',sans-serif;transform:scaleX(0.9291)">x86-64 gcc 14.2 (Editor #1)</div>
<svg style="left:1063.3px;top:193.2px" width="9.8" height="9.8" viewBox="0 0 10.5 10.5"><path d="M0.2 10.3 L0.9 7.3 L7 1.2 Q7.9 0.3 8.8 1.2 L9.4 1.8 Q10.2 2.7 9.4 3.5 L3.2 9.7 Z" fill="none" stroke="#3a3a3a" stroke-width="1.35" stroke-linejoin="round"/><path d="M6.2 2.1 L8.5 4.4" stroke="#3a3a3a" stroke-width="1.2"/><path d="M0.2 10.3 L0.8 7.9 L2.6 9.7Z" fill="#3a3a3a"/></svg>
<svg style="left:1082px;top:193.2px" width="10.6" height="10.6" viewBox="0 0 10 10"><path d="M0.7 0.7 L9.3 9.3 M9.3 0.7 L0.7 9.3" stroke="#222" stroke-width="1.5" fill="none"/></svg>
<div class="bar" style="left:887.5px;top:208.3px;width:649px;height:77.5px"></div>
<div class="box" style="left:888.4px;top:209px;width:700px;height:42px"></div>
<div class="t" style="left:902.00px;top:224.00px;font-size:17.8px;color:#363b41;font-family:'Liberation Sans',sans-serif;transform:scaleX(0.9666)">x86-64 gcc 14.2</div>
<svg style="left:1107.00px;top:227.00px" width="10.00" height="5.50" viewBox="0 0 10.00 5.50"><path d="M0 0 H10.00 L5.00 5.50Z" fill="#2d3136"/></svg>
<svg style="left:1148.9px;top:222.6px" width="16" height="15.6" viewBox="0 0 16 15.6"><path d="M12.6 9.2 V13.2 Q12.6 14.7 11.1 14.7 H2.4 Q0.9 14.7 0.9 13.2 V4.6 Q0.9 3.1 2.4 3.1 H6.4" fill="none" stroke="#2b2f33" stroke-width="1.8" stroke-linecap="round"/>
<path d="M9.6 0.9 H15.1 V6.4 M15 1 L7.2 8.8" fill="none" stroke="#2b2f33" stroke-width="1.8" stroke-linecap="round" stroke-linejoin="round"/></svg>
<div class="abs" style="left:1178.2px;top:210px;width:45.3px;height:40px;background:#e9ecef;border-left:1px solid #ced4da;border-right:1px solid #dfe3e7"></div>
<svg style="left:1191.5px;top:220.8px" width="18" height="18" viewBox="0 0 18 18"><circle cx="9" cy="9" r="9" fill="#12bc12"/><path d="M5.7 9.2 L8 11.4 L12.3 6.9" fill="none" stroke="#fff" stroke-width="1.7" stroke-linecap="round" stroke-linejoin="round"/></svg>
<div class="t" style="left:1238.20px;top:223.00px;font-size:17.6px;color:#495057;font-family:'Liberation Sans',sans-serif;transform:scaleX(1.0482)">-std=c++20 -pthread</div>
<svg style="left:897.5px;top:261.6px" width="14.2" height="14.2" viewBox="0 0 14 14"><path fill-rule="evenodd" d="M5.45 0 H8.55 L12.95 12.1 H14 V14 H8.9 V12.1 H10.25 L9.55 10 H4.45 L3.75 12.1 H5.1 V14 H0 V12.1 H1.05 Z M5.15 8 H8.85 L7 2.6 Z" fill="#212529"/></svg><svg style="left:916.20px;top:266.00px" width="7.90" height="4.50" viewBox="0 0 7.90 4.50"><path d="M0 0 H7.90 L3.95 4.50Z" fill="#212529"/></svg>
<svg style="left:943.2px;top:260.7px" width="15.8" height="15.8" viewBox="0 0 16 16"><path d="M9.95,2.33 L9.73,0.19 L6.27,0.19 L6.05,2.33 L4.06,3.47 L2.10,2.60 L0.37,5.59 L2.11,6.86 L2.11,9.14 L0.37,10.41 L2.10,13.40 L4.06,12.53 L6.05,13.67 L6.27,15.81 L9.73,15.81 L9.95,13.67 L11.94,12.53 L13.90,13.40 L15.63,10.41 L13.89,9.14 L13.89,6.86 L15.63,5.59 L13.90,2.60 L11.94,3.47Z" fill="#212529" stroke="#212529" stroke-width="1.3" stroke-linejoin="round"/><circle cx="8" cy="8" r="2.75" fill="#f8f9fa"/></svg>
<div class="t" style="left:963.90px;top:262.00px;font-size:16px;color:#212529;font-family:'Liberation Sans',sans-serif;transform:scaleX(0.9990)">Output<span style="letter-spacing:-1.36px">...</span></div><svg style="left:1027.00px;top:266.00px" width="8.00" height="4.50" viewBox="0 0 8.00 4.50"><path d="M0 0 H8.00 L4.00 4.50Z" fill="#212529"/></svg>
<svg style="left:1055px;top:261.2px" width="16" height="14" viewBox="0 0 16 14"><path d="M0.8 0 H15.2 Q16.4 0.2 15.7 1.3 L10 7.6 V13.4 Q9.9 14.3 9 13.7 L6.4 11.8 Q6 11.5 6 11 V7.6 L0.3 1.3 Q-0.4 0.2 0.8 0Z" fill="#212529"/></svg>
<div class="t" style="left:1075.70px;top:262.00px;font-size:16px;color:#212529;font-family:'Liberation Sans',sans-serif;transform:scaleX(0.9266)">Filter<span style="letter-spacing:-1.36px">...</span></div><svg style="left:1123.80px;top:266.00px" width="8.00" height="4.50" viewBox="0 0 8.00 4.50"><path d="M0 0 H8.00 L4.00 4.50Z" fill="#212529"/></svg>
<div class="abs" style="left:1142.1px;top:250.7px;width:116.3px;height:33.5px;background:#28a745;border-radius:4.5px"></div>
<svg style="left:1151.3px;top:260.9px" width="14.3" height="15.7" viewBox="0 0 14.3 15.7"><path d="M2.6 0 H13 Q14.3 0 14.3 1.2 V11 Q14.3 11.9 13.5 12 V14.2 Q14.3 14.4 14.3 15 Q14.3 15.7 13.4 15.7 H2.6 Q0 15.7 0 13.1 V2.6 Q0 0 2.6 0Z" fill="#fff"/>
<path d="M2.7 12.1 H11.8 V14 H2.7 Q1.8 14 1.8 13.05 Q1.8 12.1 2.7 12.1Z" fill="#28a745"/>
<path d="M4 3.6 H11 M4 6 H11" stroke="#28a745" stroke-width="1.1"/></svg>
<div class="t" style="left:1169.90px;top:262.00px;font-size:16px;color:#fff;font-family:'Liberation Sans',sans-serif;transform:scaleX(0.9243)">Libraries (1)</div>
<svg style="left:1268.6px;top:260.9px" width="16" height="16" viewBox="0 0 16 16"><path d="M2.7 13.3 L9.6 6.4" stroke="#212529" stroke-width="4.3" stroke-linecap="round"/>
<circle cx="11.1" cy="4.9" r="4.7" fill="#212529"/>
<path d="M12.9 5.7 L10.3 3.1 L14.6 -1.2 L17.2 1.4 Z" fill="#f8f9fa"/>
<circle cx="2.7" cy="13.3" r="0.85" fill="#f8f9fa"/></svg>
<div class="t" style="left:1288.90px;top:262.00px;font-size:16px;color:#212529;font-family:'Liberation Sans',sans-serif;transform:scaleX(0.9386)">Overrides</div>
<svg style="left:1374.3px;top:262.3px" width="13.2" height="13.2" viewBox="0 0 13 13"><path d="M6.5 0 V13 M0 6.5 H13" stroke="#212529" stroke-width="2.2" fill="none"/></svg>
<div class="t" style="left:1392.00px;top:262.00px;font-size:16px;color:#212529;font-family:'Liberation Sans',sans-serif;transform:scaleX(0.9713)">Add new<span style="letter-spacing:-1.36px">...</span></div><svg style="left:1466.40px;top:266.00px" width="9.00" height="4.70" viewBox="0 0 9.00 4.70"><path d="M0 0 H9.00 L4.50 4.70Z" fill="#212529"/></svg>
<svg style="left:1494.9px;top:260.8px" width="17" height="16" viewBox="0 0 17 16"><rect x="9.3" y="2.2" width="7.4" height="4.2" rx="1.2" fill="#212529" transform="rotate(-45 13 4.3)"/>
<path d="M6.4 10.8 L11 6.2" stroke="#212529" stroke-width="1.7"/>
<rect x="0.7" y="8.9" width="7.4" height="5.7" rx="1.4" fill="#212529" transform="rotate(-45 4.4 11.75)"/></svg>
<div class="t" style="left:1515.40px;top:262.00px;font-size:16px;color:#212529;font-family:'Liberation Sans',sans-serif;transform:scaleX(0.95)">Add tool<span style="letter-spacing:-1.36px">...</span></div>
<div class="abs" style="left:887.5px;top:284.8px;width:649px;height:1px;background:#dcdddf"></div>
<div class="abs" style="left:888.5px;top:285.8px;width:648px;height:6px;background:#fffffe"></div>
<div class="abs" style="left:963.3px;top:285.8px;width:1px;height:6px;background:#e4e4e4"></div>
<div class="abs" style="left:973.5px;top:290.2px;width:6px;height:1.5px;background:#1d8fa5;opacity:.6"></div><div class="abs" style="left:983px;top:290.2px;width:2px;height:1.5px;background:#1d8fa5;opacity:.6"></div><div class="abs" style="left:990px;top:290.2px;width:2px;height:1.5px;background:#1d8fa5;opacity:.6"></div><div class="abs" style="left:1006px;top:290.2px;width:6px;height:1.5px;background:#2222c0;opacity:.6"></div><div class="abs" style="left:1017px;top:290.2px;width:2px;height:1.5px;background:#2222c0;opacity:.6"></div><div class="abs" style="left:1038px;top:290.2px;width:2px;height:1.5px;background:#333;opacity:.6"></div><div class="abs" style="left:1049px;top:290.2px;width:3px;height:1.5px;background:#2222c0;opacity:.6"></div><div class="abs" style="left:1058px;top:290.2px;width:4px;height:1.5px;background:#2222c0;opacity:.6"></div><div class="abs" style="left:1066px;top:290.2px;width:5px;height:1.5px;background:#333;opacity:.6"></div><div class="abs" style="left:1096px;top:290.2px;width:2px;height:1.5px;background:#1d8fa5;opacity:.6"></div><div class="abs" style="left:1138px;top:290.2px;width:3px;height:1.5px;background:#1d8fa5;opacity:.6"></div><div class="abs" style="left:1144px;top:290.2px;width:2px;height:1.5px;background:#1d8fa5;opacity:.6"></div><div class="abs" style="left:887.5px;top:291.8px;width:649px;height:1px;background:#e6e7e8"></div>

<div class="tabrow" style="left:887.5px;top:293px;width:649px;height:23px"></div>
<div class="tab" style="left:887.5px;top:293px;width:233.29999999999995px;height:22.3px"></div>
<div class="t" style="left:897.90px;top:299.00px;font-size:14px;color:#8c8c8c;font-family:'Liberation Sans',sans-serif;transform:scaleX(0.9202)">x86-64 clang 15.0.0 (Editor #1)</div>
<svg style="left:1083.4px;top:300.2px" width="9.8" height="9.8" viewBox="0 0 10.5 10.5"><path d="M0.2 10.3 L0.9 7.3 L7 1.2 Q7.9 0.3 8.8 1.2 L9.4 1.8 Q10.2 2.7 9.4 3.5 L3.2 9.7 Z" fill="none" stroke="#3a3a3a" stroke-width="1.35" stroke-linejoin="round"/><path d="M6.2 2.1 L8.5 4.4" stroke="#3a3a3a" stroke-width="1.2"/><path d="M0.2 10.3 L0.8 7.9 L2.6 9.7Z" fill="#3a3a3a"/></svg>
<svg style="left:1102.3px;top:300.2px" width="10.6" height="10.6" viewBox="0 0 10 10"><path d="M0.7 0.7 L9.3 9.3 M9.3 0.7 L0.7 9.3" stroke="#222" stroke-width="1.5" fill="none"/></svg>
<div class="bar" style="left:887.5px;top:315.3px;width:649px;height:77.5px"></div>
<div class="box" style="left:888.4px;top:316px;width:700px;height:42px"></div>
<div class="t" style="left:902.00px;top:330.00px;font-size:17.8px;color:#363b41;font-family:'Liberation Sans',sans-serif;transform:scaleX(0.9686)">x86-64 clang 15.0.0</div>
<svg style="left:1107.00px;top:334.00px" width="10.00" height="5.50" viewBox="0 0 10.00 5.50"><path d="M0 0 H10.00 L5.00 5.50Z" fill="#2d3136"/></svg>
<svg style="left:1148.9px;top:329.6px" width="16" height="15.6" viewBox="0 0 16 15.6"><path d="M12.6 9.2 V13.2 Q12.6 14.7 11.1 14.7 H2.4 Q0.9 14.7 0.9 13.2 V4.6 Q0.9 3.1 2.4 3.1 H6.4" fill="none" stroke="#2b2f33" stroke-width="1.8" stroke-linecap="round"/>
<path d="M9.6 0.9 H15.1 V6.4 M15 1 L7.2 8.8" fill="none" stroke="#2b2f33" stroke-width="1.8" stroke-linecap="round" stroke-linejoin="round"/></svg>
<div class="abs" style="left:1178.2px;top:317px;width:45.3px;height:40px;background:#e9ecef;border-left:1px solid #ced4da;border-right:1px solid #dfe3e7"></div>
<svg style="left:1191.5px;top:327.8px" width="18" height="18" viewBox="0 0 18 18"><circle cx="9" cy="9" r="9" fill="#12bc12"/><path d="M5.7 9.2 L8 11.4 L12.3 6.9" fill="none" stroke="#fff" stroke-width="1.7" stroke-linecap="round" stroke-linejoin="round"/></svg>
<div class="t" style="left:1238.20px;top:330.00px;font-size:17.6px;color:#495057;font-family:'Liberation Sans',sans-serif;transform:scaleX(1.0482)">-std=c++20 -pthread</div>
<svg style="left:897.5px;top:368.6px" width="14.2" height="14.2" viewBox="0 0 14 14"><path fill-rule="evenodd" d="M5.45 0 H8.55 L12.95 12.1 H14 V14 H8.9 V12.1 H10.25 L9.55 10 H4.45 L3.75 12.1 H5.1 V14 H0 V12.1 H1.05 Z M5.15 8 H8.85 L7 2.6 Z" fill="#212529"/></svg><svg style="left:916.20px;top:373.00px" width="7.90" height="4.50" viewBox="0 0 7.90 4.50"><path d="M0 0 H7.90 L3.95 4.50Z" fill="#212529"/></svg>
<svg style="left:943.2px;top:367.7px" width="15.8" height="15.8" viewBox="0 0 16 16"><path d="M9.95,2.33 L9.73,0.19 L6.27,0.19 L6.05,2.33 L4.06,3.47 L2.10,2.60 L0.37,5.59 L2.11,6.86 L2.11,9.14 L0.37,10.41 L2.10,13.40 L4.06,12.53 L6.05,13.67 L6.27,15.81 L9.73,15.81 L9.95,13.67 L11.94,12.53 L13.90,13.40 L15.63,10.41 L13.89,9.14 L13.89,6.86 L15.63,5.59 L13.90,2.60 L11.94,3.47Z" fill="#212529" stroke="#212529" stroke-width="1.3" stroke-linejoin="round"/><circle cx="8" cy="8" r="2.75" fill="#f8f9fa"/></svg>
<div class="t" style="left:963.90px;top:369.00px;font-size:16px;color:#212529;font-family:'Liberation Sans',sans-serif;transform:scaleX(0.9990)">Output<span style="letter-spacing:-1.36px">...</span></div><svg style="left:1027.00px;top:373.00px" width="8.00" height="4.50" viewBox="0 0 8.00 4.50"><path d="M0 0 H8.00 L4.00 4.50Z" fill="#212529"/></svg>
<svg style="left:1055px;top:368.2px" width="16" height="14" viewBox="0 0 16 14"><path d="M0.8 0 H15.2 Q16.4 0.2 15.7 1.3 L10 7.6 V13.4 Q9.9 14.3 9 13.7 L6.4 11.8 Q6 11.5 6 11 V7.6 L0.3 1.3 Q-0.4 0.2 0.8 0Z" fill="#212529"/></svg>
<div class="t" style="left:1075.70px;top:369.00px;font-size:16px;color:#212529;font-family:'Liberation Sans',sans-serif;transform:scaleX(0.9266)">Filter<span style="letter-spacing:-1.36px">...</span></div><svg style="left:1123.80px;top:373.00px" width="8.00" height="4.50" viewBox="0 0 8.00 4.50"><path d="M0 0 H8.00 L4.00 4.50Z" fill="#212529"/></svg>
<div class="abs" style="left:1142.1px;top:357.7px;width:116.3px;height:33.5px;background:#28a745;border-radius:4.5px"></div>
<svg style="left:1151.3px;top:367.9px" width="14.3" height="15.7" viewBox="0 0 14.3 15.7"><path d="M2.6 0 H13 Q14.3 0 14.3 1.2 V11 Q14.3 11.9 13.5 12 V14.2 Q14.3 14.4 14.3 15 Q14.3 15.7 13.4 15.7 H2.6 Q0 15.7 0 13.1 V2.6 Q0 0 2.6 0Z" fill="#fff"/>
<path d="M2.7 12.1 H11.8 V14 H2.7 Q1.8 14 1.8 13.05 Q1.8 12.1 2.7 12.1Z" fill="#28a745"/>
<path d="M4 3.6 H11 M4 6 H11" stroke="#28a745" stroke-width="1.1"/></svg>
<div class="t" style="left:1169.90px;top:369.00px;font-size:16px;color:#fff;font-family:'Liberation Sans',sans-serif;transform:scaleX(0.9243)">Libraries (1)</div>
<svg style="left:1268.6px;top:367.9px" width="16" height="16" viewBox="0 0 16 16"><path d="M2.7 13.3 L9.6 6.4" stroke="#212529" stroke-width="4.3" stroke-linecap="round"/>
<circle cx="11.1" cy="4.9" r="4.7" fill="#212529"/>
<path d="M12.9 5.7 L10.3 3.1 L14.6 -1.2 L17.2 1.4 Z" fill="#f8f9fa"/>
<circle cx="2.7" cy="13.3" r="0.85" fill="#f8f9fa"/></svg>
<div class="t" style="left:1288.90px;top:369.00px;font-size:16px;color:#212529;font-family:'Liberation Sans',sans-serif;transform:scaleX(0.9386)">Overrides</div>
<svg style="left:1374.3px;top:369.3px" width="13.2" height="13.2" viewBox="0 0 13 13"><path d="M6.5 0 V13 M0 6.5 H13" stroke="#212529" stroke-width="2.2" fill="none"/></svg>
<div class="t" style="left:1392.00px;top:369.00px;font-size:16px;color:#212529;font-family:'Liberation Sans',sans-serif;transform:scaleX(0.9713)">Add new<span style="letter-spacing:-1.36px">...</span></div><svg style="left:1466.40px;top:373.00px" width="9.00" height="4.70" viewBox="0 0 9.00 4.70"><path d="M0 0 H9.00 L4.50 4.70Z" fill="#212529"/></svg>
<svg style="left:1494.9px;top:367.8px" width="17" height="16" viewBox="0 0 17 16"><rect x="9.3" y="2.2" width="7.4" height="4.2" rx="1.2" fill="#212529" transform="rotate(-45 13 4.3)"/>
<path d="M6.4 10.8 L11 6.2" stroke="#212529" stroke-width="1.7"/>
<rect x="0.7" y="8.9" width="7.4" height="5.7" rx="1.4" fill="#212529" transform="rotate(-45 4.4 11.75)"/></svg>
<div class="t" style="left:1515.40px;top:369.00px;font-size:16px;color:#212529;font-family:'Liberation Sans',sans-serif;transform:scaleX(0.95)">Add tool<span style="letter-spacing:-1.36px">...</span></div>
<div class="abs" style="left:887.5px;top:391.8px;width:649px;height:1px;background:#dcdddf"></div>
<div class="abs" style="left:888.5px;top:392.8px;width:648px;height:6px;background:#fffffe"></div>
<div class="abs" style="left:963.3px;top:392.8px;width:1px;height:6px;background:#e4e4e4"></div>
<div class="abs" style="left:963.6px;top:392.8px;width:573px;height:6px;background:#d5ece6"></div><div class="abs" style="left:1110.5px;top:397.3px;width:1.5px;height:1.5px;background:#3a3ad0"></div><div class="abs" style="left:887.5px;top:398.8px;width:649px;height:1px;background:#e6e7e8"></div>
<div class="abs" style="left:888px;top:315px;width:34px;height:11.2px;background:#f8f9fa"></div>
<svg style="left:900.6px;top:314.4px" width="9.4" height="3.4" viewBox="0 0 9.4 3.4"><path d="M0 0 H9.4 Q8 3 4.7 3.1 Q1.4 3 0 0Z" fill="#111"/></svg>

<div class="bar" style="left:887.5px;top:398.6px;width:649px;height:6px"></div>
<div class="tabrow" style="left:887.5px;top:403.5px;width:649px;height:22px"></div>
<div class="tab" style="left:887.5px;top:403.5px;width:308.79999999999995px;height:21px"></div>
<div class="t" style="left:898.30px;top:409.00px;font-size:14px;color:#8c8c8c;font-family:'Liberation Sans',sans-serif;transform:scaleX(0.9251)">Output of x86-64 clang 15.0.0 (Compiler #4)</div>
<svg style="left:1159px;top:409.8px" width="9.8" height="9.8" viewBox="0 0 10.5 10.5"><path d="M0.2 10.3 L0.9 7.3 L7 1.2 Q7.9 0.3 8.8 1.2 L9.4 1.8 Q10.2 2.7 9.4 3.5 L3.2 9.7 Z" fill="none" stroke="#3a3a3a" stroke-width="1.35" stroke-linejoin="round"/><path d="M6.2 2.1 L8.5 4.4" stroke="#3a3a3a" stroke-width="1.2"/><path d="M0.2 10.3 L0.8 7.9 L2.6 9.7Z" fill="#3a3a3a"/></svg>
<svg style="left:1177.6px;top:409.8px" width="10.6" height="10.6" viewBox="0 0 10 10"><path d="M0.7 0.7 L9.3 9.3 M9.3 0.7 L0.7 9.3" stroke="#222" stroke-width="1.5" fill="none"/></svg>
<div class="bar" style="left:887.5px;top:424.6px;width:649px;height:36px;border-bottom:1px solid #dcdddf"></div>
<svg style="left:897.5px;top:436.0px" width="14.2" height="14.2" viewBox="0 0 14 14"><path fill-rule="evenodd" d="M5.45 0 H8.55 L12.95 12.1 H14 V14 H8.9 V12.1 H10.25 L9.55 10 H4.45 L3.75 12.1 H5.1 V14 H0 V12.1 H1.05 Z M5.15 8 H8.85 L7 2.6 Z" fill="#212529"/></svg><svg style="left:916.20px;top:440.30px" width="7.90" height="4.50" viewBox="0 0 7.90 4.50"><path d="M0 0 H7.90 L3.95 4.50Z" fill="#212529"/></svg>
<svg style="left:943.3px;top:436.1px" width="14" height="14.2" viewBox="0 0 14 14.2"><rect x="0.9" y="0.9" width="12.2" height="12.4" rx="2" fill="none" stroke="#212529" stroke-width="1.6"/></svg>
<div class="t" style="left:962.30px;top:436.00px;font-size:16px;color:#212529;font-family:'Liberation Sans',sans-serif;transform:scaleX(0.9403)">Wrap lines</div>
<svg style="left:1056.4px;top:436.1px" width="14" height="14.2" viewBox="0 0 14 14.2"><path d="M0 1.2 H14 M0 5.1 H14 M0 9 H14 M0 12.9 H14" stroke="#212529" stroke-width="2.1"/></svg>
<div class="t" style="left:1078.00px;top:436.00px;font-size:16px;color:#212529;font-family:'Liberation Sans',sans-serif;transform:scaleX(0.9150)">Select all</div>
<div class="abs" style="left:887.5px;top:460.8px;width:649px;height:190px;background:#f5f5f5"></div>
<div class="t" style="left:905.60px;top:470.00px;font-size:14.32px;color:#1a1a1a;font-family:'Liberation Mono',monospace;transform:scaleX(0.9953);-webkit-text-stroke:0.2px #1a1a1a">ASM generation compiler returned: 0</div>
<div class="t" style="left:905.60px;top:493.00px;font-size:14.32px;color:#1a1a1a;font-family:'Liberation Mono',monospace;transform:scaleX(0.9955);-webkit-text-stroke:0.2px #1a1a1a">Execution build compiler returned: 0</div>
<div class="t" style="left:905.60px;top:516.00px;font-size:14.32px;color:#1a1a1a;font-family:'Liberation Mono',monospace;transform:scaleX(0.9951);-webkit-text-stroke:0.2px #1a1a1a">Program returned: 0</div>
<div class="t" style="left:921.60px;top:538.00px;font-size:14.6px;color:#4a4a4a;font-family:'Liberation Sans',sans-serif;transform:scaleX(0.9920);word-spacing:6.4px">0 1 4</div>

<div class="abs" style="left:887px;top:57px;width:1px;height:593px;background:#e0e0e0"></div>

</body>
</html>
